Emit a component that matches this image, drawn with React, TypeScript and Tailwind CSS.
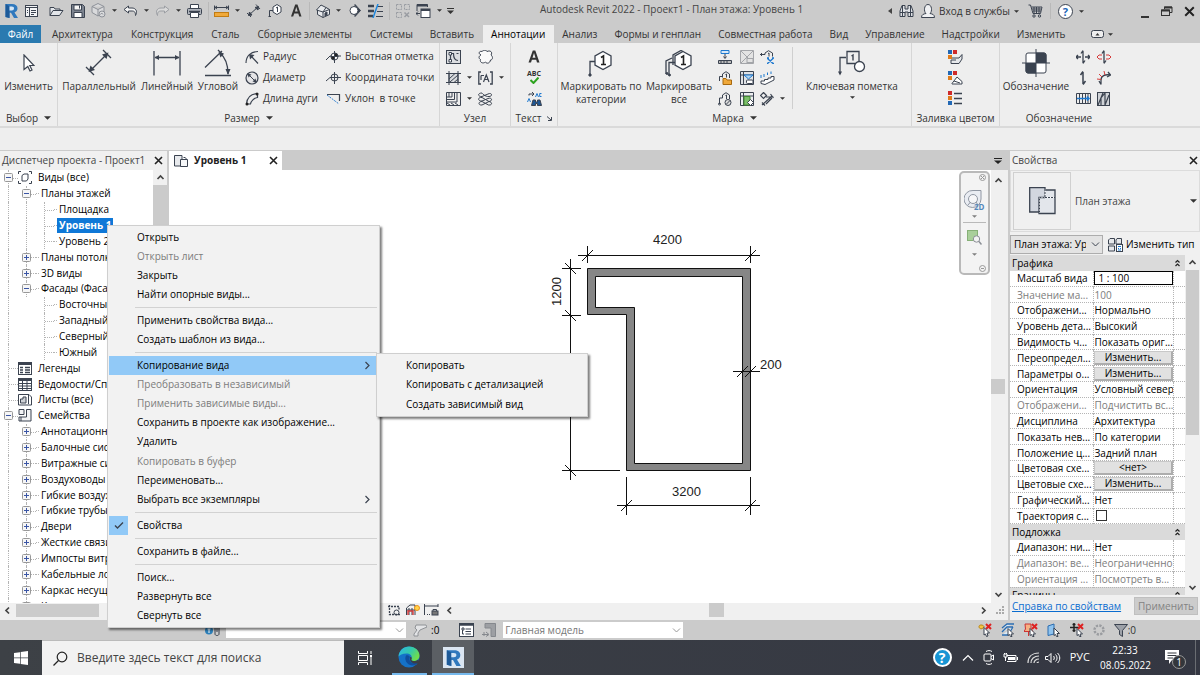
import { useState, type JSX, type ReactNode } from 'react';

type IcoProps = {
  children: ReactNode;
  w?: number;
  h?: number;
  box?: string;
  color?: string;
};

const INK = '#3b4350';

const Ico = ({ children, w = 16, h = 16, box, color = INK }: IcoProps): JSX.Element => (
  <svg
    width={w}
    height={h}
    viewBox={box ?? `0 0 ${w} ${h}`}
    fill="none"
    stroke={color}
    strokeWidth="1"
    className="shrink-0"
    aria-hidden="true"
  >
    {children}
  </svg>
);

const Caret = ({ big = false }: { big?: boolean }): JSX.Element => (
  <svg width={big ? 7 : 5} height={big ? 4 : 3} viewBox="0 0 6 3" className="shrink-0" aria-hidden="true">
    <path d="M0 0H6L3 3Z" fill="#333" />
  </svg>
);

const Chevron = ({ dir, color = '#444' }: { dir: 'up' | 'down' | 'left' | 'right'; color?: string }): JSX.Element => {
  const paths = {
    up: 'M1.5 6L4.5 3L7.5 6',
    down: 'M1.5 3L4.5 6L7.5 3',
    left: 'M6 1.5L3 4.5L6 7.5',
    right: 'M3 1.5L6 4.5L3 7.5',
  };
  return (
    <Ico w={9} h={9} color={color}>
      <path d={paths[dir]} strokeWidth="1.7" />
    </Ico>
  );
};

const Cross = ({ size = 9 }: { size?: number }): JSX.Element => (
  <Ico w={size} h={size} box="0 0 9 9" color="#222">
    <path d="M1 1L8 8M8 1L1 8" strokeWidth="1.6" />
  </Ico>
);

/* ---------- title bar ---------- */

const QatButton = ({ label, children }: { label: string; children: ReactNode }): JSX.Element => (
  <button type="button" aria-label={label} className="flex h-[21px] w-[21px] shrink-0 items-center justify-center">
    {children}
  </button>
);

const QatCaret = ({ label }: { label: string }): JSX.Element => (
  <button type="button" aria-label={label} className="flex h-[21px] w-[11px] shrink-0 items-center justify-center">
    <Caret />
  </button>
);

const QatLine = (): JSX.Element => (
  <span className="flex w-[6px] shrink-0 justify-center">
    <span className="h-[18px] w-px bg-[#b9b9b9]" />
  </span>
);

const RevitLogo = ({ size }: { size: number }): JSX.Element => (
  <svg width={size} height={size} viewBox="0 0 16 16" className="shrink-0" aria-hidden="true">
    <path d="M2.500 1H9C12.500 1 14.500 2.600 14.500 5.300C14.500 7.500 13.200 8.800 11.500 9.400L15 15H11L8 9.800H6.500V15L2.500 14Z" fill="#2f78bd" />
    <path d="M2.500 1L6.500 3.200V15L2.500 14Z" fill="#1d5a99" />
    <path d="M6.500 3.500H8.800C10.200 3.500 11 4.200 11 5.400C11 6.700 10.100 7.400 8.800 7.400H6.500Z" fill="#d5e6f5" />
  </svg>
);

const TitleBar = (): JSX.Element => (
  <header className="flex h-[25px] shrink-0 items-start justify-between bg-[#cbcbcb]">
    <div className="flex items-center">
      <QatButton label="Revit">
        <RevitLogo size={16} />
      </QatButton>
      <QatButton label="Главная">
        <Ico w={13} h={12}>
          <rect x=".5" y=".5" width="12" height="11" fill="#f3f4f6" />
          <path d="M.5 2.500H12.500M4.500 3V11M6 5.500H11M6 7.500H11M6 9.500H9M2 5.500H3M2 7.500H3" />
        </Ico>
      </QatButton>
      <span className="w-1 shrink-0" />
      <QatButton label="Открыть">
        <Ico w={15} h={12}>
          <path d="M1 10.500V2.500H5L6 4H11V5.500M1 10.500L4 5.500H14L10.500 10.500Z" fill="#e3e6ea" />
        </Ico>
      </QatButton>
      <QatButton label="Сохранить">
        <Ico w={14} h={14}>
          <path d="M.5.5H11.500L13.500 2.500V13.500H.5Z" fill="#7d8490" />
          <path d="M3 1H10.500V6H3Z" fill="#f6f6f6" />
          <path d="M3 8.500H11V13.500H3Z" fill="#fff" />
          <path d="M8.500 1.500V4.500" />
        </Ico>
      </QatButton>
      <QatButton label="Синхронизация">
        <Ico w={15} h={15} color="#8d9198">
          <path d="M7 .5L13 3.500V9L7 13L1 9.500V3.500Z M1 3.500L7 6.500L13 3.500M7 6.500V13" fill="#d9dadc" />
          <circle cx="11" cy="11" r="3" fill="#d9dadc" />
          <path d="M9.500 11.500L10.700 10L12 11.500" />
        </Ico>
      </QatButton>
      <QatCaret label="Варианты синхронизации" />
      <QatButton label="Отменить">
        <Ico w={15} h={12}>
          <path d="M5.500 1L1 4.500L5.500 8V6H9C11.500 6 12.500 7 12.500 10.500C15 6 12.500 3 9 3H5.500Z" fill="#f4f4f4" />
        </Ico>
      </QatButton>
      <QatCaret label="Список отмены" />
      <QatButton label="Повторить">
        <Ico w={15} h={12} color="#9b9ea3">
          <path d="M9.500 1L14 4.500L9.500 8V6H6C3.500 6 2.500 7 2.500 10.500C0 6 2.500 3 6 3H9.500Z" fill="#dadada" />
        </Ico>
      </QatButton>
      <QatCaret label="Список повтора" />
      <QatButton label="Печать">
        <Ico w={15} h={14}>
          <path d="M3.500 5V.5H11.500V5" fill="#fff" />
          <rect x=".5" y="4.500" width="14" height="6" rx="1" fill="#aeb3bb" />
          <path d="M2 7.500H13" strokeWidth="1.500" />
          <path d="M3.500 8.500H11.500V13.500H3.500Z" fill="#fff" />
        </Ico>
      </QatButton>
      <QatLine />
      <QatButton label="Измерить">
        <Ico w={15} h={12}>
          <path d="M.5.500V5M14.500.5V5M1 2.500H14M3 1L1 2.500L3 4M12 1L14 2.500L12 4" />
          <rect x=".5" y="7.500" width="14" height="4" fill="#f0a93a" stroke="#c27c12" />
        </Ico>
      </QatButton>
      <QatCaret label="Варианты измерения" />
      <QatButton label="Параллельный размер">
        <Ico w={15} h={14}>
          <path d="M3 11L12 3M1 9L5 13M10 .5L14 5" />
          <path d="M2.500 11.500L3.500 8L6 11ZM12.500 2.500L9 3.500L12 6Z" fill={INK} />
        </Ico>
      </QatButton>
      <QatButton label="Марка по категории">
        <Ico w={14} h={14}>
          <path d="M1.500 12V6.500H5M.5 12.500H3" />
          <path d="M9 .5L13 3V8L9 10.500L5 8V3Z" fill="#fff" />
          <path d="M8 4L9.500 3V8" />
        </Ico>
      </QatButton>
      <QatButton label="Текст">
        <Ico w={12} h={13}>
          <path d="M1 12.500L5.200.5H7.500L11.500 12.500H9.200L8.300 9.500H4.200L3.200 12.500ZM4.900 7.500H7.700L6.300 3Z" fill="#333" stroke="none" />
        </Ico>
      </QatButton>
      <QatLine />
      <QatButton label="3D вид">
        <Ico w={14} h={14}>
          <path d="M.5 6L5 1L10 3.500L13.500 5.500V10.500L7 13.500L1.500 10.500V6" fill="#e8eaed" />
          <path d="M.5 6L7 8L13.500 5.500M7 8V13.500M7 8L10 3.500" />
          <path d="M9 9L11 8V11L9 12Z" fill={INK} />
        </Ico>
      </QatButton>
      <QatCaret label="Варианты 3D вида" />
      <QatButton label="Разрез">
        <Ico w={12} h={13}>
          <path d="M6 .5L11.500 6.500L6 12.500Z" fill={INK} />
          <circle cx="5" cy="6.500" r="4" fill="#fff" />
        </Ico>
      </QatButton>
      <QatButton label="Тонкие линии">
        <Ico w={15} h={14}>
          <path d="M0 2H6M0 7H6M0 12H5" strokeWidth="2.600" />
          <path d="M9 2.500H15M9 7.500H15M8 12.500H15" />
          <path d="M10 0L5 14" stroke="#1d87e0" strokeWidth="1.500" />
        </Ico>
      </QatButton>
      <QatLine />
      <QatButton label="Закрыть неактивные">
        <Ico w={14} h={14} color="#999ca2">
          <path d="M.5.5H5.500V5.500H.5ZM8.500.5H13.500V5.500H8.500ZM.5 8.500H5.500V13.500H.5Z" strokeDasharray="2 1" />
          <path d="M8.500 8.500L13 13M13 8.500L8.500 13" strokeWidth="1.500" />
        </Ico>
      </QatButton>
      <QatButton label="Переключить окна">
        <Ico w={15} h={14}>
          <path d="M1 7V.5H11.500V3" />
          <path d="M1 1.500H11.500" strokeWidth="2" />
          <rect x="5" y="5" width="9" height="8.500" fill="#fff" />
          <path d="M5 6H14" strokeWidth="2" />
          <path d="M0 9.500H4M2 7.500L0 9.500L2 11.500" />
        </Ico>
      </QatButton>
      <QatCaret label="Список окон" />
      <button type="button" aria-label="Настройка панели" className="flex h-[21px] w-[10px] items-center justify-center">
        <Ico w={7} h={6}>
          <path d="M0 .5H7" stroke="#333" />
          <path d="M0 2.500H7L3.500 6Z" fill="#333" stroke="none" />
        </Ico>
      </button>
    </div>
    <h1 className="truncate px-2 text-[10px] leading-[18px] text-[#444]">
      Autodesk Revit 2022 - Проект1 - План этажа: Уровень 1
    </h1>
    <div className="flex h-[22px] shrink-0 items-center">
      <Ico w={4} h={6}>
        <path d="M4 0V6L0 3Z" fill="#444" stroke="none" />
      </Ico>
      <button type="button" aria-label="Поиск" className="ml-[7px]">
        <Ico w={15} h={14}>
          <path d="M3 1.500H6V5H9V1.500H12L14 7V12.500H9V8H6V12.500H1V7ZM1 8.500H6M9 8.500H14M3.500 1.500V12M11.500 1.500V12" fill="#dfe2e6" />
        </Ico>
      </button>
      <button type="button" className="ml-[7px] flex items-center gap-1 whitespace-nowrap text-[10px] text-[#333]">
        <Ico w={14} h={14}>
          <path d="M.5 13.500C.5 10.500 2.500 10 5 9.500C2.500 7.500 3 .5 7 .5C11 .5 11.500 7.500 9 9.500C11.500 10 13.500 10.500 13.500 13.500Z" fill="#f0f1f3" />
        </Ico>
        Вход в службы
        <Caret />
      </button>
      <button type="button" aria-label="Корзина" className="ml-[9px]">
        <Ico w={15} h={14}>
          <path d="M.5 1H2.500L5 9.500H12.500L14 3H3.500M4 5H13M5 7H13M6 3V9M8.500 3V9M11 3V9" />
          <circle cx="6" cy="12" r="1.200" />
          <circle cx="11.500" cy="12" r="1.200" />
        </Ico>
      </button>
      <span className="mx-[7px] h-[16px] w-px bg-[#b9b9b9]" />
      <button
        type="button"
        aria-label="Справка"
        className="flex h-[15px] w-[15px] items-center justify-center rounded-full border border-[#3b4350] bg-white text-[11px] font-bold leading-none text-[#1a66b8]"
      >
        ?
      </button>
      <span className="ml-[6px]">
        <Caret />
      </span>
      <button type="button" aria-label="Свернуть" className="ml-[57px] flex h-4 w-[8px] items-end pb-[1px]">
        <span className="h-[2px] w-full bg-[#333]" />
      </button>
      <button type="button" aria-label="Восстановить" className="ml-[12px]">
        <Ico w={12} h={11} color="#333">
          <path d="M3.500 3V1H11V6.500H8.500" />
          <path d="M3 1.500H11" strokeWidth="2" />
          <rect x=".5" y="4" width="8" height="5.500" />
          <path d="M.5 4.500H8.500" strokeWidth="2" />
        </Ico>
      </button>
      <button type="button" aria-label="Закрыть" className="ml-[11px] mr-[5px]">
        <Cross size={11} />
      </button>
    </div>
  </header>
);

/* ---------- ribbon ---------- */

const TABS = [
  'Архитектура',
  'Конструкция',
  'Сталь',
  'Сборные элементы',
  'Системы',
  'Вставить',
  'Аннотации',
  'Анализ',
  'Формы и генплан',
  'Совместная работа',
  'Вид',
  'Управление',
  'Надстройки',
  'Изменить',
];

const RibbonTabs = ({ active, onPick }: { active: string; onPick: (tab: string) => void }): JSX.Element => (
  <nav className="flex h-[18px] shrink-0 bg-[#cbcbcb] text-[10px] leading-[17px] text-[#333]">
    <button type="button" className="w-[41px] shrink-0 bg-[#2a7ab0] text-white">
      Файл
    </button>
    <div className="ml-[2px] flex">
      {TABS.map((tab, i) => (
        <button
          key={tab}
          type="button"
          onClick={() => {
            onPick(tab);
          }}
          className={`whitespace-nowrap pr-[9px] ${i < 5 ? 'pl-[9px]' : 'pl-[8px]'} ${tab === active ? 'bg-[#eeeeee] text-black' : ''}`}
        >
          {tab}
        </button>
      ))}
    </div>
    <button type="button" aria-label="Свернуть ленту" className="ml-[17px] flex items-center gap-1">
      <Ico w={13} h={8}>
        <rect x=".5" y=".5" width="12" height="7" rx="2" fill="#eee" />
        <path d="M4.500 5.500L6.500 3L8.500 5.500Z" fill="#333" stroke="none" />
      </Ico>
      <Caret />
    </button>
  </nav>
);

type PanelProps = { title: string; width: string; caret?: boolean; corner?: boolean; children: ReactNode };

const Panel = ({ title, width, caret, corner, children }: PanelProps): JSX.Element => (
  <section className={`flex shrink-0 flex-col border-r border-[#d6d6d6] ${width}`}>
    <div className="flex h-[67px] items-start pt-[3px]">{children}</div>
    <div className="flex h-[16px] items-center justify-center gap-[6px] whitespace-nowrap text-[10px] text-[#333]">
      {title}
      {caret && <Caret big />}
      {corner && (
        <Ico w={5} h={5}>
          <path d="M0 .5L4 4M4.500 1V4.500H1" />
        </Ico>
      )}
    </div>
  </section>
);

type BigButtonProps = { label: string; width: string; caret?: boolean; children: ReactNode };

const BigButton = ({ label, width, caret, children }: BigButtonProps): JSX.Element => (
  <button
    type="button"
    className={`flex shrink-0 flex-col items-center text-center text-[10px] leading-[13px] text-[#333] ${width}`}
  >
    <span className="flex h-[34px] items-center">{children}</span>
    <span className="whitespace-pre">{label}</span>
    {caret && (
      <span className="flex h-[9px] items-center">
        <Caret />
      </span>
    )}
  </button>
);

const RowButton = ({ label, children }: { label: string; children: ReactNode }): JSX.Element => (
  <button type="button" className="flex h-[21px] items-center gap-[4px] whitespace-pre text-[10px] text-[#333]">
    {children}
    {label}
  </button>
);

const Tool = ({ label, caret, children }: { label: string; caret?: boolean; children: ReactNode }): JSX.Element => (
  <button type="button" aria-label={label} className="flex h-[21px] items-center gap-[6px]">
    {children}
    {caret && <Caret />}
  </button>
);

const TagShape = (): JSX.Element => (
  <>
    <path d="M15 1.500L23 6V15L15 19.500L7 15V6Z" fill="#fff" strokeWidth="1.300" />
    <path d="M13 7.500L15.500 6V14.500M13 14.500H18" strokeWidth="1.600" stroke="#222" />
  </>
);

const Ribbon = (): JSX.Element => (
  <div className="flex h-[85px] shrink-0 overflow-hidden border-b-2 border-[#dadada] bg-[#eeeeee]">
    <Panel title="Выбор" width="w-[58px]" caret>
      <BigButton label="Изменить" width="w-[57px]">
        <Ico w={12} h={18}>
          <path d="M1 1L11 11.500H6.800L9 16L7 17L4.800 12.500L1 15.500Z" fill="#fff" strokeWidth="1.200" />
        </Ico>
      </BigButton>
    </Panel>
    <Panel title="Размер" width="w-[382px]" caret>
      <BigButton label="Параллельный" width="w-[82px]">
        <Ico w={28} h={28}>
          <path d="M5 22L22 5M1 18L9 26M18 1L26 9" strokeWidth="1.300" />
          <path d="M3.500 23L5.500 16.500L10 21ZM23.500 3.500L17 5.500L21.500 10Z" fill={INK} stroke="none" />
        </Ico>
      </BigButton>
      <BigButton label="Линейный" width="w-[54px]">
        <Ico w={28} h={26}>
          <path d="M1 1V25.500M27 1V25.500M2 7.500H26" strokeWidth="1.300" />
          <path d="M1.500 7.500L6 5V10ZM26.500 7.500L22 5V10Z" fill={INK} stroke="none" />
        </Ico>
      </BigButton>
      <BigButton label="Угловой" width="w-[48px]">
        <Ico w={28} h={28}>
          <path d="M1 18.500L18 2M1 26.500H27M16 4C22 9 24 17 24 25M14 1L19 6" strokeWidth="1.300" />
          <path d="M14.500 3L20 4.500L16.500 8.500ZM24 26L21.500 20H26.500Z" fill={INK} stroke="none" />
        </Ico>
      </BigButton>
      <div className="ml-[3px] w-[81px]">
        <RowButton label="Радиус">
          <Ico w={14} h={14}>
            <path d="M1 13C1 6 6 1.500 13 1.500M6.500 6.500L13 13.500" strokeWidth="1.200" />
            <path d="M4 4L9.500 5L5 9.500Z" fill={INK} stroke="none" />
          </Ico>
        </RowButton>
        <RowButton label="Диаметр">
          <Ico w={14} h={14}>
            <circle cx="7" cy="7" r="6" fill="#e4e4e6" strokeWidth="1.200" />
            <path d="M3 3L11 11" />
            <path d="M2.500 2.500L6.500 3.500L3.500 6.500ZM11.500 11.500L7.500 10.500L10.500 7.500Z" fill={INK} stroke="none" />
          </Ico>
        </RowButton>
        <RowButton label="Длина дуги">
          <Ico w={14} h={14}>
            <path d="M1.500 12C2 5.500 6 2 12.500 1.500M5.500 12C6 9 9 6 12.500 5.500M1 12H6M12.500 1V6" strokeWidth="1.200" />
            <circle cx="2" cy="12" r="1.500" fill="#222" stroke="none" />
            <circle cx="12" cy="2" r="1.500" fill="#222" stroke="none" />
          </Ico>
        </RowButton>
      </div>
      <div>
        <RowButton label="Высотная отметка">
          <Ico w={15} h={12}>
            <path d="M0 9L4 5H15M8.500 0V12" />
            <circle cx="8.500" cy="5.500" r="3.500" fill="#fff" />
            <path d="M8.500 5.500V2A3.500 3.500 0 0 1 12 5.500ZM8.500 5.500V9A3.500 3.500 0 0 1 5 5.500Z" fill="#222" />
          </Ico>
        </RowButton>
        <RowButton label="Координата точки">
          <Ico w={15} h={12}>
            <circle cx="8.500" cy="5.500" r="3.500" />
            <path d="M0 9L4 5.500H15M8.500 0V12" />
          </Ico>
        </RowButton>
        <RowButton label="Уклон  в точке">
          <Ico w={15} h={12}>
            <path d="M1 1.500H13.500V8" strokeWidth="1.200" />
            <path d="M1 2L13 11" stroke="#2f7fd0" strokeDasharray="2 1" />
          </Ico>
        </RowButton>
      </div>
    </Panel>
    <Panel title="Узел" width="w-[71px]">
      <div className="ml-[6px] w-[32px]">
        <Tool label="Линия детализации">
          <Ico w={15} h={14}>
            <rect x=".5" y=".5" width="14" height="13" fill="#dcdee1" />
            <path d="M4.500 4V11M5.500 3.500H7.500C7.500 8 9 10.500 12 10.500M10.500 3.500H12.500" strokeWidth="1.200" />
            <path d="M3 2.500H5.500V5H3ZM3 9.500H5.500V12H3Z" fill="#fff" />
          </Ico>
        </Tool>
        <Tool label="Область" caret>
          <Ico w={15} h={14}>
            <path d="M3 2.500H12V11.500H3Z" fill="#d9dbde" />
            <path d="M0 2.500H15M0 11.500H15M3 0V14M12 0V14M3 8L9 2.500M4 11L12 4M8 11.500L12 8" />
          </Ico>
        </Tool>
        <Tool label="Компонент" caret>
          <Ico w={15} h={14}>
            <path d="M.5.5H14.500V13.500H.5ZM.5 5H6V.5M8.500 1V7.500H1M11 1V10H1M3 1V5" />
            <path d="M1 11L4 13M5 11L8 13M9 11L12 13" />
          </Ico>
        </Tool>
      </div>
      <div>
        <Tool label="Пометочное облако">
          <Ico w={15} h={14}>
            <path d="M3 5C0 4 1 .5 4 1.500C6 -.5 9 .5 9 1.500C12 0 15 2 13 5C15.500 7 14.500 10 12.500 10C12 13.500 8.500 14 7.500 12C5 14 1.500 12.500 2.500 9.500C.5 8.500 .5 6 3 5Z" fill="#fafafa" />
          </Ico>
        </Tool>
        <Tool label="Группа элементов узла" caret>
          <Ico w={15} h={14}>
            <path d="M3 1H.8V13H3M12 1H14.200V13H12" strokeWidth="1.300" />
            <path d="M3 4.500H6M3 4.500V9M5.500 11L8.300 4L11 11M6.500 8.500H10" strokeWidth="1.200" />
          </Ico>
        </Tool>
        <Tool label="Изоляция">
          <Ico w={15} h={14}>
            <path d="M4 1C-1 1 0 5 4 4.500L10 2C14 0 15 4.500 11 4.500C7 5 4 1 4 1M4 5.500C-1 5 0 9.500 4 9L10 6.500C14 5 15 9 11 9.500L4 5.500M4 9.500C0 9.500 0 13.500 4 13L11 9.500C14.500 10 14.500 13.500 10.500 13Z" />
          </Ico>
        </Tool>
      </div>
    </Panel>
    <Panel title="Текст" width="w-[47px]" corner>
      <div className="flex w-full flex-col items-center">
        <Tool label="Текст">
          <Ico w={12} h={13}>
            <path d="M.5 12.500L4.800.5H7.300L11.500 12.500H9L8.200 9.800H3.900L3 12.500ZM4.500 7.800H7.500L6 3Z" fill="#333" stroke="none" />
          </Ico>
        </Tool>
        <Tool label="Орфография">
          <span className="flex flex-col items-center">
            <span className="h-[6px] text-[7px] font-bold leading-[6px] text-[#333]">ABC</span>
            <Ico w={9} h={7} color="#2da31f">
              <path d="M.5 3L3.500 6L8.500 .5" strokeWidth="2" />
            </Ico>
          </span>
        </Tool>
        <Tool label="Найти и заменить">
          <Ico w={15} h={14}>
            <path d="M2 3.500V2H6M5 0L7 2L5 4" />
            <path d="M8.500 5L10 1.500L11.500 5M14.500 1.500H12.700V4.500H14.500M.5 10L2 6.500L3.500 10" stroke="#1d78cf" />
            <path d="M6 8H8.500V10H10.500V8H13L14.500 13.500H10.500V11.500H8.500V13.500H4.500Z" fill="#1e5795" />
          </Ico>
        </Tool>
      </div>
    </Panel>
    <Panel title="Марка" width="w-[354px]" caret>
      <BigButton label={'Маркировать по\nкатегории'} width="w-[86px]">
        <Ico w={26} h={27}>
          <path d="M2 25V11.500H7" strokeWidth="1.300" />
          <circle cx="2" cy="25" r="1.200" fill={INK} />
          <TagShape />
        </Ico>
      </BigButton>
      <BigButton label={'Маркировать\nвсе'} width="w-[70px]">
        <Ico w={29} h={27} box="-3 0 29 27">
          <path d="M-2 24V11L4 8M1 25.500V12.500H7M5 15V5L13 .5L15 1.500" strokeWidth="1.300" />
          <circle cx="-1" cy="23.500" r="1" fill={INK} />
          <circle cx="1.500" cy="25" r="1" fill={INK} />
          <TagShape />
        </Ico>
      </BigButton>
      <div className="ml-[4px] w-[22px]">
        <Tool label="Марка балки">
          <Ico w={14} h={14}>
            <path d="M3 .5H11V3.500H3Z" stroke="#1d78cf" fill="#d8e9f8" />
            <path d="M7 4V8M5.500 6.500L7 8.500L8.500 6.500" />
            <path d="M.5 10.500H13.500V13.500H.5ZM3 10.500V13M6 10.500V13M9 10.500V13" fill="#bbb" />
          </Ico>
        </Tool>
        <Tool label="Марка материала">
          <Ico w={14} h={14}>
            <path d="M1.500 10V5.500H4.500M4.500 6.500V3L8 .7L11.500 3V7M7.500 3.500L8.500 3V6.500" />
            <path d="M5 7.500H8L9 9H13.500V13.500H5Z" fill="#f0a93a" stroke="#a7690f" />
          </Ico>
        </Tool>
        <Tool label="Марка арматуры">
          <Ico w={14} h={14}>
            <path d="M1.500 12V6H4.500V3L8 .7L11.500 3V7M7.500 3.500L8.500 3V7" />
            <circle cx="1.500" cy="12" r="1" />
            <circle cx="10" cy="10.500" r="3" fill="#ddd" />
            <path d="M8 12.500L12 8.500" />
          </Ico>
        </Tool>
      </div>
      <div className="w-[21px]">
        <Tool label="Марка помещения">
          <Ico w={14} h={14} color="#a3a5a9">
            <path d="M.5.5H13.500V13.500H.5ZM1 1L13 13M13 1L1 13" fill="#e3e3e3" />
            <rect x="7" y="8.500" width="6" height="4" fill="#e3e3e3" />
          </Ico>
        </Tool>
        <Tool label="Марка пространства">
          <Ico w={14} h={14}>
            <path d="M.5.5H13.500V13.500H.5ZM3.500.5V13M.5 4H13.500" fill="#dfe2e6" />
            <path d="M4 4H13L8.500 8Z" fill="#b5d6f0" stroke="#1d78cf" />
            <rect x="6.500" y="9" width="6.500" height="3.500" rx="1" fill="#fff" />
          </Ico>
        </Tool>
        <Tool label="Марка зоны">
          <Ico w={14} h={14}>
            <path d="M.5.5H13.500V13.500H.5ZM3.500 .5V13M.5 4H13.500" fill="#eceef0" />
            <path d="M4 4.500H10V13H4Z" fill="#7cc06a" stroke="#458a35" />
            <path d="M10.500 7.500L13.500 10.500L10.500 13.500L7.500 10.500Z" fill="#fff" />
          </Ico>
        </Tool>
      </div>
      <div className="w-[31px]">
        <Tool label="Просмотр марок">
          <Ico w={14} h={14}>
            <path d="M0 4.500H5V3L8.500 .7L12.500 3V6.500M8 3.500L9 3V6.500M1.500 3V6" />
            <path d="M7.500 8.500L13 13.500M13 8.500L7.500 13.500M7 8H9M12 8H14M7 13.500H9M12 13.500H14" stroke="#1d78cf" strokeWidth="1.400" />
          </Ico>
        </Tool>
        <Tool label="Номер проступи">
          <Ico w={15} h={14}>
            <path d="M1 12.500V10H4.500V8.500H8V7H11V5.500H14V9L5 13.500Z" fill="#fff" />
            <path d="M1 7V4M4 6V3M7.500 4V1.500M11 3V.5" stroke="#1d78cf" />
          </Ico>
        </Tool>
        <Tool label="Несколько арматур" caret>
          <Ico w={14} h={14}>
            <path d="M3.500 .5L6.500 3.500L3.500 6.500L.5 3.500ZM6 5H13.500M2 13L12 4M6 12L12 6M2 10.500L5 13.500M10.500 2L13.500 6" strokeWidth="1.200" />
          </Ico>
        </Tool>
      </div>
      <span className="ml-[1px] mt-[1px] h-[62px] w-px bg-[#cfcfcf]" />
      <BigButton label="Ключевая пометка" width="w-[118px]" caret>
        <Ico w={28} h={26}>
          <path d="M2 24V7.500H8M21 14V1.500H9V13.500H17" strokeWidth="1.300" />
          <path d="M0 21.500H4L2 25.500Z" fill={INK} stroke="none" />
          <path d="M13.500 6L15 5V10.500" strokeWidth="1.400" />
          <circle cx="21.500" cy="16.500" r="5" fill="#fff" strokeWidth="1.300" />
        </Ico>
      </BigButton>
    </Panel>
    <Panel title="Заливка цветом" width="w-[88px]">
      <div className="flex w-full flex-col items-center">
        <Tool label="Обозначение заливки трубопроводов">
          <Ico w={15} h={14}>
            <path d="M4 8H11L14 4.500V9L11 13.500H3V10H8" fill="#e6e8eb" />
            <path d="M0 0H4V4H0Z" fill="#2268b5" stroke="none" />
            <path d="M5 0H9V4H5Z" fill="#cf2a2a" stroke="none" />
            <path d="M0 5H4V9H0Z" fill="#e07b1a" stroke="none" />
          </Ico>
        </Tool>
        <Tool label="Обозначение заливки воздуховодов">
          <Ico w={15} h={14}>
            <path d="M4 12.500L9 6L14 10.500V13H4ZM6 10L12 12" fill="#fff" />
            <path d="M0 0H4V4H0Z" fill="#2268b5" stroke="none" />
            <path d="M5 0H9V4H5Z" fill="#cf2a2a" stroke="none" />
            <path d="M0 5H4V9H0Z" fill="#e07b1a" stroke="none" />
          </Ico>
        </Tool>
        <Tool label="Легенда цветового обозначения">
          <Ico w={15} h={15}>
            <path d="M6 2.500H14M6 7.500H14M6 12.500H14" strokeWidth="1.300" />
            <path d="M0 0H4V4H0Z" fill="#cf2a2a" stroke="none" />
            <path d="M0 5H4V9H0Z" fill="#e07b1a" stroke="none" />
            <path d="M0 10H4V14H0Z" fill="#2268b5" stroke="none" />
          </Ico>
        </Tool>
      </div>
    </Panel>
    <section className="flex w-[118px] shrink-0 flex-col">
      <div className="flex h-[67px] items-start pt-[3px]">
        <BigButton label="Обозначение" width="w-[72px]">
          <Ico w={28} h={28}>
            <path d="M14 0V28M0 14H28" />
            <rect x="4" y="4" width="20" height="20" rx="2" fill="#fff" />
            <path d="M14 4H22A2 2 0 0 1 24 6V14H14ZM14 14V24H6A2 2 0 0 1 4 22V14Z" fill={INK} />
          </Ico>
        </BigButton>
        <div className="ml-[4px] w-[21px]">
          <Tool label="Направление пролета">
            <Ico w={14} h={14}>
              <path d="M7 1V13M5 3.500L7 .5M9 10.500L7 13.500M0 7H5M9 7H14M2 5L0 7L2 9M12 5L14 7L12 9" strokeWidth="1.300" />
            </Ico>
          </Tool>
          <Tool label="Балка">
            <Ico w={14} h={14}>
              <path d="M7 1V13M4.500 4L7 .5M9.500 10L7 13.500" strokeWidth="1.500" />
            </Ico>
          </Tool>
          <Tool label="Траектория лестницы">
            <Ico w={15} h={11}>
              <path d="M.5.5H14.500V10.500H.5ZM3.500.5V10.500M6.500.5V10.500M9.500.5V10.500M12 .5V10.500" />
              <path d="M1 5.500H13M11 3.500L13 5.500L11 7.500" stroke="#1d78cf" strokeWidth="1.500" />
            </Ico>
          </Tool>
        </div>
        <div>
          <Tool label="Армирование по площади">
            <Ico w={14} h={14}>
              <path d="M5 5H2L0 7L2 9H5M9 5H12L14 7L12 9H9" stroke="#d63a3a" />
              <path d="M7 1V13M5 3.500L7 .5M9 10.500L7 13.500" strokeWidth="1.300" />
            </Ico>
          </Tool>
          <Tool label="Армирование по траектории">
            <Ico w={14} h={14}>
              <path d="M4 13.500V9C4 5 8 3 13 4M11 1L13.500 4L10 6M2 10L4 13.500" strokeWidth="1.300" />
              <path d="M0 8L4 8.500M2 3L5 6M7 0L8 4" stroke="#d63a3a" />
            </Ico>
          </Tool>
          <Tool label="Область заполнения">
            <Ico w={13} h={14}>
              <rect x=".5" y=".5" width="12" height="13" fill="#cfd2d6" />
              <path d="M1 13L6 1M4 13V6L8 1M8 13L12 3M8 1V13" strokeWidth="1.200" />
            </Ico>
          </Tool>
        </div>
      </div>
      <div className="flex h-[16px] items-center justify-center text-[10px] text-[#333]">Обозначение</div>
    </section>
  </div>
);

/* ---------- project browser ---------- */

type Node = {
  text: string;
  level: 0 | 1 | 2;
  mark?: 'plus' | 'minus';
  icon?: 'views' | 'legend' | 'sheet' | 'list' | 'family';
  tail?: boolean;
};

const NODES: Node[] = [
  { text: 'Виды (все)', level: 0, mark: 'minus', icon: 'views' },
  { text: 'Планы этажей', level: 1, mark: 'minus' },
  { text: 'Площадка', level: 2 },
  { text: 'Уровень 1', level: 2 },
  { text: 'Уровень 2', level: 2 },
  { text: 'Планы потолка', level: 1, mark: 'plus' },
  { text: '3D виды', level: 1, mark: 'plus' },
  { text: 'Фасады (Фасад)', level: 1, mark: 'minus' },
  { text: 'Восточный', level: 2, tail: true },
  { text: 'Западный', level: 2, tail: true },
  { text: 'Северный', level: 2, tail: true },
  { text: 'Южный', level: 2, tail: true },
  { text: 'Легенды', level: 0, icon: 'legend' },
  { text: 'Ведомости/Спец', level: 0, icon: 'list' },
  { text: 'Листы (все)', level: 0, icon: 'sheet' },
  { text: 'Семейства', level: 0, mark: 'minus', icon: 'family' },
  { text: 'Аннотационные', level: 1, mark: 'plus' },
  { text: 'Балочные системы', level: 1, mark: 'plus' },
  { text: 'Витражные системы', level: 1, mark: 'plus' },
  { text: 'Воздуховоды', level: 1, mark: 'plus' },
  { text: 'Гибкие воздуховоды', level: 1, mark: 'plus' },
  { text: 'Гибкие трубы', level: 1, mark: 'plus' },
  { text: 'Двери', level: 1, mark: 'plus' },
  { text: 'Жесткие связи', level: 1, mark: 'plus' },
  { text: 'Импосты витража', level: 1, mark: 'plus' },
  { text: 'Кабельные лотки', level: 1, mark: 'plus' },
  { text: 'Каркас несущий', level: 1, mark: 'plus' },
  { text: 'Колонны', level: 1, mark: 'plus' },
];

const NodeIcon = ({ kind }: { kind: NonNullable<Node['icon']> }): JSX.Element => {
  if (kind === 'views') {
    return (
      <Ico w={14} h={13}>
        <path d="M.5 3V.5H3M11 .5H13.500V3M.5 10V12.500H3M11 12.500H13.500V10" />
        <path d="M4 4.500L6 3H10V8L8.500 10H4Z" fill="#fff" />
      </Ico>
    );
  }
  if (kind === 'legend') {
    return (
      <Ico w={14} h={13}>
        <rect x=".5" y=".5" width="13" height="12" fill="#fff" />
        <path d="M0 1.500H14" strokeWidth="3" />
        <path d="M2 5.500H5M7 5.500H12M2 8H5M7 8H12M2 10.500H5M7 10.500H12" strokeWidth="1.500" />
      </Ico>
    );
  }
  if (kind === 'list') {
    return (
      <Ico w={14} h={13}>
        <rect x=".5" y=".5" width="13" height="12" fill="#fff" />
        <path d="M0 1.500H14" strokeWidth="3" />
        <path d="M1 5.500H13M1 8H13M1 10.500H13M4.500 3V12M9 3V12" />
      </Ico>
    );
  }
  if (kind === 'sheet') {
    return (
      <Ico w={14} h={13}>
        <path d="M.5 1.500H11L13.500 4V12H.5Z" fill="#fff" />
        <path d="M2.500 10V6H5V4H8V10ZM10.500 2V11" fill="#cfd2d6" />
      </Ico>
    );
  }
  return (
    <Ico w={14} h={13}>
      <path d="M1 .5H6V5.500H1ZM8.500 .5H13V12H1V8H8.500Z" fill="#f2f3f5" />
      <path d="M3 8V12" />
    </Ico>
  );
};

type CellKind = 'line' | 'tee' | 'plus' | 'minus' | 'empty';

const TreeCell = ({ kind }: { kind: CellKind }): JSX.Element => (
  <span className="relative flex w-[18px] shrink-0 items-center self-stretch">
    {kind !== 'empty' && <span className="absolute inset-y-0 left-[8px] border-l border-dotted border-[#b4b4b4]" />}
    {kind !== 'empty' && kind !== 'line' && (
      <span className="absolute left-[9px] right-0 top-1/2 border-t border-dotted border-[#b4b4b4]" />
    )}
    {(kind === 'plus' || kind === 'minus') && (
      <svg width="9" height="9" viewBox="0 0 9 9" className="relative ml-[4px]" aria-hidden="true">
        <rect x=".5" y=".5" width="8" height="8" rx="1" fill="#f6f6f6" stroke="#989898" />
        <path d={kind === 'plus' ? 'M2 4.500H7M4.500 2V7' : 'M2 4.500H7'} stroke="#3a55a5" />
      </svg>
    )}
  </span>
);

const TreeRow = ({ node, selected }: { node: Node; selected: boolean }): JSX.Element => (
  <li className="flex min-h-0 flex-1 items-center whitespace-nowrap">
    <TreeCell kind={node.level > 0 ? 'line' : (node.mark ?? 'tee')} />
    {node.level === 0 && node.icon && (
      <span className="flex w-[18px] shrink-0">
        <NodeIcon kind={node.icon} />
      </span>
    )}
    {node.level === 1 && <TreeCell kind={node.mark ?? 'tee'} />}
    {node.level === 2 && (
      <>
        <TreeCell kind={node.tail ? 'empty' : 'line'} />
        <TreeCell kind="tee" />
      </>
    )}
    {node.level > 0 && <span className="w-[3px] shrink-0 border-t border-dotted border-[#b4b4b4]" />}
    <button
      type="button"
      className={`self-stretch px-[2px] leading-[15px] ${selected ? 'bg-[#0f78d7] font-bold text-white' : ''}`}
    >
      {node.text}
    </button>
  </li>
);

const ProjectBrowser = (): JSX.Element => (
  <aside className="flex w-[167px] shrink-0 flex-col bg-[#f0f0f0]">
    <div className="flex h-[19px] shrink-0 items-center justify-between pl-[2px] pr-1">
      <h2 className="whitespace-nowrap text-[10px] text-[#444]">Диспетчер проекта - Проект1</h2>
      <button type="button" aria-label="Закрыть диспетчер">
        <Cross />
      </button>
    </div>
    <div className="flex min-h-0 flex-1">
      <div className="min-w-0 flex-1 overflow-hidden bg-white">
        <ul className="flex h-[444px] flex-col text-[10px] text-black">
          {NODES.map((node) => (
            <TreeRow key={node.text} node={node} selected={node.text === 'Уровень 1'} />
          ))}
        </ul>
      </div>
      <div className="flex w-[14px] shrink-0 flex-col items-center">
        <span className="flex h-[15px] items-center">
          <Chevron dir="up" />
        </span>
        <span className="h-[300px] w-full bg-[#cbcbcb]" />
      </div>
    </div>
    <div className="flex h-[14px] shrink-0 items-center pl-[3px]">
      <Chevron dir="left" />
      <span className="ml-[4px] h-[13px] w-[83px] bg-[#cbcbcb]" />
    </div>
    <span className="h-[3px] shrink-0" />
  </aside>
);

/* ---------- context menu ---------- */

type Entry = { text: string; off?: boolean; sub?: boolean; hot?: boolean; check?: boolean };

const MENU: Entry[][] = [
  [
    { text: 'Открыть' },
    { text: 'Открыть лист', off: true },
    { text: 'Закрыть' },
    { text: 'Найти опорные виды...' },
  ],
  [{ text: 'Применить свойства вида...' }, { text: 'Создать шаблон из вида...' }],
  [
    { text: 'Копирование вида', sub: true, hot: true },
    { text: 'Преобразовать в независимый', off: true },
    { text: 'Применить зависимые виды...', off: true },
    { text: 'Сохранить в проекте как изображение...' },
    { text: 'Удалить' },
    { text: 'Копировать в буфер', off: true },
    { text: 'Переименовать...' },
    { text: 'Выбрать все экземпляры', sub: true },
  ],
  [{ text: 'Свойства', check: true }],
  [{ text: 'Сохранить в файле...' }],
  [{ text: 'Поиск...' }, { text: 'Развернуть все' }, { text: 'Свернуть все' }],
];

const SUBMENU: Entry[] = [
  { text: 'Копировать' },
  { text: 'Копировать с детализацией' },
  { text: 'Создать зависимый вид' },
];

const MenuEntry = ({ entry }: { entry: Entry }): JSX.Element => (
  <button
    type="button"
    role="menuitem"
    disabled={entry.off}
    className={`flex min-h-0 flex-1 items-center whitespace-nowrap text-left ${entry.hot ? 'bg-[#91c9f7]' : ''} ${entry.off ? 'text-[#7c7c7c]' : 'text-black'}`}
  >
    <span className={`mr-[9px] flex w-[19px] shrink-0 items-center justify-center self-stretch ${entry.check ? 'bg-[#91c9f7]' : ''}`}>
      {entry.check && (
        <Ico w={10} h={9}>
          <path d="M1 4.500L3.500 7L9 1.500" strokeWidth="1.400" />
        </Ico>
      )}
    </span>
    <span className="flex-1">{entry.text}</span>
    {entry.sub && (
      <span className="mr-[7px]">
        <Ico w={7} h={9}>
          <path d="M1.500 1L5 4.500L1.500 8" strokeWidth="1.200" />
        </Ico>
      </span>
    )}
  </button>
);

const ContextMenu = (): JSX.Element => (
  <>
    <div
      role="menu"
      className="absolute left-[107px] top-[225px] flex h-[403px] w-[273px] flex-col border border-[#cfcfcf] bg-[#f2f2f2] p-px py-[2px] text-[10px] shadow-[2px_2px_2px_rgba(0,0,0,0.5)]"
    >
      {MENU.map((group, i) => (
        <div key={group[0].text} className="contents">
          {i > 0 && <hr className="my-[3px] ml-[26px] mr-px h-px shrink-0 border-0 bg-[#d2d2d2]" />}
          {group.map((entry) => (
            <MenuEntry key={entry.text} entry={entry} />
          ))}
        </div>
      ))}
    </div>
    <div
      role="menu"
      className="absolute left-[376px] top-[353px] flex h-[64px] w-[212px] flex-col border border-[#cfcfcf] bg-[#f2f2f2] p-px py-[2px] text-[10px] shadow-[2px_2px_2px_rgba(0,0,0,0.5)]"
    >
      {SUBMENU.map((entry) => (
        <MenuEntry key={entry.text} entry={entry} />
      ))}
    </div>
  </>
);

/* ---------- drawing area ---------- */

const PlanDrawing = (): JSX.Element => (
  <svg width="822" height="433" viewBox="169 170 822 433" fill="none" stroke="#111" className="shrink-0" role="img" aria-label="План этажа">
    <path
      d="M587.500 268.500H750.500V470.500H626.500V314.500H587.500ZM595.500 276.500V307.500H634.500V463.500H742.500V276.500Z"
      fill="#868686"
      fillRule="evenodd"
    />
    <path d="M578 255.500H760M587.500 246V263M750.500 246V263M617 505.500H760M626.500 477V515M750.500 477V515" />
    <path d="M570.500 259V480M562 268.500H581M562 315.500H581M562 470.500H620M733 371.500H760" />
    <path d="M582 261L593 250M745 261L756 250M621 511L632 500M745 511L756 500M737 377L748 366M745 377L756 366" />
    <path d="M565 263L576 274M565 310L576 321M565 465L576 476" />
    <g fill="#222" stroke="none" fontFamily="'Liberation Sans', Arial, sans-serif" fontSize="13">
      <text x="653" y="244">4200</text>
      <text x="672" y="496">3200</text>
      <text x="760" y="369">200</text>
      <text transform="translate(561 306) rotate(-90)">1200</text>
    </g>
  </svg>
);

const NavBar = (): JSX.Element => (
  <div className="absolute right-[1px] top-[1px] flex h-[104px] w-[31px] flex-col items-center rounded-[5px] border-2 border-[#b9b9b9] bg-[#f3f3f3] py-[1px]">
    <button type="button" aria-label="Закрыть навигацию" className="mr-[2px] self-end">
      <Ico w={7} h={7} color="#999">
        <circle cx="3.500" cy="3.500" r="3" />
        <path d="M2 2L5 5M5 2L2 5" />
      </Ico>
    </button>
    <button type="button" aria-label="Штурвал 2D" className="mt-[9px] flex">
      <Ico w={22} h={20} color="#9097a3">
        <path d="M9 .5H17V9A8.500 8.500 0 1 1 9 .5Z" fill="#e9ecf2" />
        <circle cx="9" cy="9" r="4.500" fill="#f6f6f8" />
        <path d="M4 15L6.500 12M14 15L12 12" />
        <text x="10" y="19.500" fontSize="8" fontWeight="700" fill="#5487bb" stroke="none" fontFamily="Open Sans, sans-serif">
          2D
        </text>
      </Ico>
    </button>
    <span className="mt-[5px] opacity-60">
      <Caret />
    </span>
    <span className="mt-[4px] h-px w-[23px] shrink-0 bg-[#b9b9b9]" />
    <button type="button" aria-label="Масштаб" className="mt-[7px]">
      <Ico w={15} h={15} color="#8b8f96">
        <rect x=".5" y=".5" width="10" height="10" fill="#a9cf9a" stroke="#86b077" />
        <circle cx="9.500" cy="9" r="3.200" fill="#f3f3f3" />
        <path d="M12 11.500L14.500 14.500" strokeWidth="1.500" />
      </Ico>
    </button>
    <span className="mt-[8px] opacity-60">
      <Caret />
    </span>
    <span className="mr-[2px] mt-auto self-end">
      <Ico w={7} h={7} color="#999">
        <circle cx="3.500" cy="3.500" r="3" />
        <path d="M2 3.500H5" />
      </Ico>
    </span>
  </div>
);

const ViewArea = (): JSX.Element => (
  <main className="flex min-w-0 flex-1 flex-col border-l-2 border-[#cbcbcb] bg-[#f0f0f0]">
    <div className="flex h-[19px] shrink-0 items-stretch bg-[#cbcbcb]">
      <div className="flex w-[113px] items-center bg-white pl-[5px]">
        <Ico w={14} h={12}>
          <path d="M.5.5H8V11H.5Z" fill="#e8eaed" />
          <path d="M6.500 4.500H13.500V11.500H6.500Z" fill="#f6f7f8" />
          <path d="M9.500 2.500H12V4" strokeDasharray="2 1" />
        </Ico>
        <span className="ml-[6px] flex-1 whitespace-nowrap text-[10px] font-bold text-[#222]">Уровень 1</span>
        <button type="button" aria-label="Закрыть вид" className="mr-[4px]">
          <Cross />
        </button>
      </div>
      <button type="button" aria-label="Список вкладок" className="ml-auto mr-[6px] flex items-center">
        <Ico w={8} h={6}>
          <path d="M0 .5H8" stroke="#222" />
          <path d="M0 2.500H8L4 6Z" fill="#222" stroke="none" />
        </Ico>
      </button>
    </div>
    <div className="flex min-h-0 flex-1 pr-[3px]">
      <div className="relative flex min-w-0 flex-1 justify-end overflow-hidden bg-white">
        <PlanDrawing />
        <NavBar />
      </div>
      <div className="flex w-[14px] shrink-0 flex-col items-center">
        <span className="flex h-[20px] items-center">
          <Chevron dir="up" />
        </span>
        <span className="mt-[189px] h-[15px] w-full bg-[#cbcbcb]" />
        <span className="mb-[4px] mt-auto">
          <Chevron dir="down" />
        </span>
      </div>
    </div>
    <div className="flex h-[14px] shrink-0 items-center pl-[219px] pr-[4px]">
      <button type="button" aria-label="Границы обрезки">
        <Ico w={13} h={11}>
          <path d="M1.500 0V9.500H13M0 1.500H11V5" strokeDasharray="2 1" strokeWidth="1.300" />
          <circle cx="8.500" cy="7.500" r="2.500" />
        </Ico>
      </button>
      <button type="button" aria-label="Временные свойства" className="ml-[5px]">
        <Ico w={14} h={12}>
          <path d="M.5 11V4L4 1H9V11M3 4V11M6 4V11M.5 6H9" />
          <path d="M2 11V7H7V11" stroke="#d63a3a" strokeWidth="1.400" />
          <circle cx="11" cy="4" r="2.500" fill="#ffd54a" stroke="#f0921a" />
        </Ico>
      </button>
      <button type="button" aria-label="Зависимости" className="ml-[4px]">
        <Ico w={15} h={12}>
          <path d="M.5 0V11M14 0V3M1 2H14" />
          <path d="M3 10.500H7" strokeDasharray="1 1" />
          <path d="M9 7V5.500H12.500V7" />
          <rect x="8" y="7" width="6" height="4" fill="#777" />
        </Ico>
      </button>
      <span className="ml-[6px]">
        <Chevron dir="left" />
      </span>
      <span className="ml-auto mr-[255px] h-[14px] w-[15px] bg-[#cbcbcb]" />
      <Chevron dir="right" />
      <span className="ml-[8px]">
        <Ico w={8} h={8} color="#aaa">
          <path d="M6 1H8M3 4H5M6 4H8M0 7H2M3 7H5M6 7H8" strokeWidth="2" />
        </Ico>
      </span>
    </div>
    <span className="h-[3px] shrink-0" />
  </main>
);

/* ---------- properties ---------- */

type Prop = { name: string; value: string; kind?: 'input' | 'button' | 'check' | 'head'; off?: boolean };

const PROPS: Prop[] = [
  { name: 'Графика', value: '', kind: 'head' },
  { name: 'Масштаб вида', value: '1 : 100', kind: 'input' },
  { name: 'Значение ма...', value: '100', off: true },
  { name: 'Отображени...', value: 'Нормально' },
  { name: 'Уровень дета...', value: 'Высокий' },
  { name: 'Видимость ч...', value: 'Показать ориг...' },
  { name: 'Переопредел...', value: 'Изменить...', kind: 'button' },
  { name: 'Параметры о...', value: 'Изменить...', kind: 'button' },
  { name: 'Ориентация', value: 'Условный север' },
  { name: 'Отображени...', value: 'Подчистить вс...', off: true },
  { name: 'Дисциплина', value: 'Архитектура' },
  { name: 'Показать нев...', value: 'По категории' },
  { name: 'Положение ц...', value: 'Задний план' },
  { name: 'Цветовая схе...', value: '<нет>', kind: 'button' },
  { name: 'Цветовые схе...', value: 'Изменить...', kind: 'button' },
  { name: 'Графический...', value: 'Нет' },
  { name: 'Траектория с...', value: '', kind: 'check' },
  { name: 'Подложка', value: '', kind: 'head' },
  { name: 'Диапазон: ни...', value: 'Нет' },
  { name: 'Диапазон: ве...', value: 'Неограниченно', off: true },
  { name: 'Ориентация ...', value: 'Посмотреть в...', off: true },
  { name: 'Границы', value: '', kind: 'head' },
];

const PropValue = ({ prop }: { prop: Prop }): JSX.Element => {
  if (prop.kind === 'input') {
    return (
      <input
        aria-label={prop.name}
        defaultValue={prop.value}
        className="block h-[14px] w-full border border-black bg-white px-[4px] leading-[12px] outline-none"
      />
    );
  }
  if (prop.kind === 'button') {
    return (
      <button
        type="button"
        aria-label={`${prop.name} ${prop.value}`}
        className="block h-[14px] w-full border border-b-2 border-r-2 border-[#adadad] border-l-[#c8c8c8] border-t-[#c8c8c8] bg-[#e1e1e1] leading-[11px]"
      >
        {prop.value}
      </button>
    );
  }
  if (prop.kind === 'check') {
    return (
      <input
        type="checkbox"
        aria-label={prop.name}
        className="ml-[2px] block h-[11px] w-[11px] appearance-none border border-[#333] bg-white checked:bg-[#333]"
      />
    );
  }
  return <span className="block overflow-hidden pl-[1px]">{prop.value}</span>;
};

const Properties = (): JSX.Element => (
  <aside className="flex w-[192px] shrink-0 flex-col border-l-2 border-[#cbcbcb] bg-[#f0f0f0] text-[10px]">
    <div className="flex h-[19px] shrink-0 items-center justify-between pl-[2px] pr-[2px] text-[#444]">
      <h2>Свойства</h2>
      <button type="button" aria-label="Закрыть свойства">
        <Cross />
      </button>
    </div>
    <button type="button" className="flex h-[62px] shrink-0 items-center border border-[#dcdcdc] pl-[2px] pr-[2px] text-[#444]">
      <span className="flex h-[58px] w-[58px] items-center justify-center border border-[#d0d0d0]">
        <Ico w={27} h={28}>
          <path d="M.7.7H16V25H.7Z" fill="#d3d7df" strokeWidth="1.300" />
          <path d="M16 3H26V26.500H10V10.500H16" fill="#e3e6eb" strokeWidth="1.300" />
          <path d="M16 2V10.500H10.500V26M16 10.500H26" stroke="#fff" />
          <path d="M16 2V10.500H10.500V26M16 10.500H26" strokeDasharray="2 1" />
        </Ico>
      </span>
      <span className="ml-[4px] flex-1 text-left">План этажа</span>
      <Caret big />
    </button>
    <div className="flex h-[23px] shrink-0 items-center pt-[2px]">
      <div className="relative w-[93px]">
        <select
          aria-label="Экземпляр"
          className="block h-[19px] w-full appearance-none border border-[#adadad] bg-[#e3e3e3] pl-[3px] pr-[16px] text-black"
        >
          <option>План этажа: Уровень 1</option>
        </select>
        <span className="pointer-events-none absolute right-[3px] top-[5px]">
          <Ico w={9} h={9}>
            <path d="M1 2.500L4.500 6L8 2.500" />
          </Ico>
        </span>
      </div>
      <button type="button" className="ml-[5px] flex items-center gap-[3px] whitespace-nowrap text-black">
        <Ico w={15} h={14}>
          <path d="M.5 2L2 .5H6.500V6H.5ZM8 2L9 .5H13.500V6H8ZM.5 8H6.500V13H.5Z" fill="#e6e8eb" />
          <rect x="8.500" y="6.500" width="6" height="7" fill="#fff" />
          <path d="M10 8.500H13M10 10.500H11M12 10.500H13M10 12H13" stroke="#1d78cf" />
        </Ico>
        Изменить тип
      </button>
    </div>
    <div className="flex min-h-0 flex-1 overflow-hidden">
      <div className="min-w-0 flex-1 overflow-hidden bg-white">
        <table className="h-[348px] w-full table-fixed border-collapse leading-[12px] text-black">
          <colgroup>
            <col className="w-[83px]" />
            <col />
            <col className="w-[11px]" />
          </colgroup>
          <tbody>
            {PROPS.map((prop, i) =>
              prop.kind === 'head' ? (
                <tr key={i} className="h-[15px] bg-[#dadada]">
                  <th colSpan={3} scope="colgroup" className="p-0 pl-[2px] text-left font-normal">
                    <span className="flex items-center justify-between pr-[4px]">
                      {prop.name}
                      <Ico w={7} h={8} color="#222">
                        <path d="M1.500 3.500L3.500 1.500L5.500 3.500M1.500 7L3.500 5L5.500 7" strokeWidth="1.200" />
                      </Ico>
                    </span>
                  </th>
                </tr>
              ) : (
                <tr key={i} className={`h-[15px] border-b border-dotted border-[#b5b5b5] ${prop.off ? 'text-[#7c7c7c]' : ''}`}>
                  <th scope="row" className="overflow-hidden whitespace-nowrap p-0 pl-[7px] text-left font-normal">
                    {prop.name}
                  </th>
                  <td className="overflow-hidden whitespace-nowrap border-x border-dotted border-[#b5b5b5] p-0">
                    <PropValue prop={prop} />
                  </td>
                  <td className="p-0" />
                </tr>
              ),
            )}
          </tbody>
        </table>
      </div>
      <div className="flex w-[15px] shrink-0 flex-col items-center">
        <span className="flex h-[15px] items-center">
          <Chevron dir="up" />
        </span>
        <span className="h-[165px] w-[13px] bg-[#cbcbcb]" />
        <span className="mb-[3px] mt-auto">
          <Chevron dir="down" />
        </span>
      </div>
    </div>
    <div className="flex h-[25px] shrink-0 items-center justify-between pb-[3px] pl-[2px] pr-[2px]">
      <a href="#properties" className="whitespace-nowrap text-[#0a6ccf] underline">
        Справка по свойствам
      </a>
      <button type="button" disabled className="h-[18px] w-[64px] border border-[#bfbfbf] bg-[#cccccc] text-[#838383]">
        Применить
      </button>
    </div>
  </aside>
);

/* ---------- status bar and taskbar ---------- */

const StatusBar = (): JSX.Element => (
  <footer className="flex h-[20px] shrink-0 items-center bg-[#cbcbcb] pl-[205px] text-[10px]">
    <Ico w={15} h={13}>
      <circle cx="4" cy="6.500" r="4" fill="#2c7fb8" stroke="none" />
      <path d="M2.500 5H5.500M4 5V9" stroke="#fff" />
      <path d="M10 3V10C10 12 14 12 14 10V3M12 3V8" />
    </Ico>
    <div className="relative ml-[6px] w-[180px]">
      <select aria-label="Рабочий набор" className="block h-[16px] w-full appearance-none bg-white">
        <option aria-label="Нет набора" />
      </select>
      <span className="pointer-events-none absolute right-[2px] top-[4px]">
        <Ico w={9} h={9} color="#999">
          <path d="M1 2.500L4.500 6L8 2.500" />
        </Ico>
      </span>
    </div>
    <span className="ml-[7px] flex items-center gap-[4px] text-black">
      <Ico w={14} h={13} color="#8f9296">
        <path d="M3 1H13L14 3L7 6L5 9V12H1V10L4 6L2 4Z" fill="#e3e4e6" />
      </Ico>
      :0
    </span>
    <button type="button" aria-label="Варианты" className="ml-[20px]">
      <Ico w={15} h={14}>
        <rect x=".5" y=".5" width="14" height="13" fill="#fff" />
        <path d="M0 1.500H15" strokeWidth="2.500" />
        <path d="M3 5H5V7H3ZM6.500 6H12M6.500 8.500H12M6.500 11H12M3.500 7V11H5" />
      </Ico>
    </button>
    <button type="button" aria-label="Добавить в набор" className="ml-[8px]">
      <Ico w={14} h={14} color="#85888d">
        <path d="M3 .5H13.500V13.500H9V5H3Z" fill="#9d9fa3" />
        <path d="M0 11.500H6M4 9L7 11.500L4 13.500M2 9V13" />
      </Ico>
    </button>
    <div className="relative ml-[7px] w-[180px]">
      <select aria-label="Вариант конструкции" className="block h-[16px] w-full appearance-none bg-white pl-[2px] text-[#777]">
        <option>Главная модель</option>
      </select>
      <span className="pointer-events-none absolute right-[2px] top-[4px]">
        <Ico w={9} h={9} color="#999">
          <path d="M1 2.500L4.500 6L8 2.500" />
        </Ico>
      </span>
    </div>
    <div className="ml-auto mr-[64px] flex items-center gap-[9px]">
      <button type="button" aria-label="Выбор связей">
        <Ico w={14} h={14}>
          <path d="M1 3.500C1 1.500 5 1.500 6 3.500C5 6.500 1 6.500 1 3.500Z" fill="#f4c542" stroke="#b98312" />
          <path d="M8 1L13 6M13 1L8 6" stroke="#d22" strokeWidth="2" />
          <path d="M6 4.500L11.500 10H9L10 13L8.500 13.500L7.500 11L6 12Z" fill="#fff" />
        </Ico>
      </button>
      <button type="button" aria-label="Выбор подложки">
        <Ico w={14} h={14} color="#2b6cb0">
          <path d="M1 5L6 1H13M1 9L6 4H12M1 12H7L12 4" fill="#dcebf8" strokeWidth="1.300" />
          <path d="M7 5.500L12.500 11H10L11 13.500H9.500L8.500 11.500L7 12.500Z" fill="#fff" stroke={INK} />
        </Ico>
      </button>
      <button type="button" aria-label="Выбор закрепленных">
        <Ico w={14} h={14}>
          <path d="M1 1H7V6L9 8.500H0L1.500 6ZM4.500 9V13" fill="#f6b183" stroke="#c33" />
          <path d="M8 1L13 6M13 1L8 6" stroke="#d22" strokeWidth="2" />
          <path d="M6 5.500L11.500 11H9L10 13.500H8.500L7.500 11.500L6 12.500Z" fill="#fff" />
        </Ico>
      </button>
      <button type="button" aria-label="Выбор по грани">
        <Ico w={14} h={14}>
          <path d="M1 3L7 1V11L1 12.500Z" fill="#8fc3ee" stroke="#2b6cb0" />
          <path d="M7 5L12.500 10.500H10L11 13.500H9.500L8.500 11.500L7 12.500Z" fill="#fff" />
        </Ico>
      </button>
      <button type="button" aria-label="Перетаскивание">
        <Ico w={14} h={14}>
          <path d="M4 0V9M0 4.500H9M2.500 1.500H5.500M2.500 7.500H5.500" stroke="#222" strokeWidth="1.500" />
          <path d="M8 1L13 6M13 1L8 6" stroke="#d22" strokeWidth="2" />
          <path d="M7 5.500L12.500 11H10L11 13.500H9.500L8.500 11.500L7 12.500Z" fill="#fff" />
        </Ico>
      </button>
      <Ico w={12} h={12} color="#9a9ca0">
        <circle cx="6" cy="6" r="4.500" strokeWidth="2.400" strokeDasharray="2.200 1.300" />
      </Ico>
      <span className="flex items-center text-[#333]">
        <Ico w={14} h={13}>
          <path d="M.5 .5H13.500L8.500 6.500V12.500L5.500 10.500V6.500Z" fill="#9da1a8" />
        </Ico>
        :0
      </span>
    </div>
  </footer>
);

const Taskbar = (): JSX.Element => (
  <div className="flex h-[35px] shrink-0 items-stretch bg-linear-to-r from-[#3d4146] to-[#343742] text-white">
    <button type="button" aria-label="Пуск" className="flex w-[42px] shrink-0 items-center justify-center">
      <svg width="14" height="14" viewBox="0 0 14 14" fill="#fff" aria-hidden="true">
        <path d="M0 2L6 1.200V6.600H0ZM6.700 1.100L14 0V6.600H6.700ZM0 7.300H6V12.800L0 12ZM6.700 7.300H14V14L6.700 12.900Z" />
      </svg>
    </button>
    <label className="flex w-[302px] shrink-0 items-center border-t border-[#bbb] bg-[#f2f2f2] pl-[11px]">
      <Ico w={15} h={15} color="#222">
        <circle cx="9" cy="6" r="4.800" strokeWidth="1.200" />
        <path d="M5.500 9.500L.5 14.500" strokeWidth="1.200" />
      </Ico>
      <input
        type="text"
        aria-label="Поиск"
        placeholder="Введите здесь текст для поиска"
        className="ml-[9px] min-w-0 flex-1 bg-transparent text-[12px] text-[#333] outline-none placeholder:text-[#444]"
      />
    </label>
    <button type="button" aria-label="Представление задач" className="flex w-[42px] shrink-0 items-center justify-center">
      <Ico w={15} h={14} color="#fff">
        <path d="M.5 0V2.500H9.500V0M.5 14V11.500H9.500V14M.5 4.500H9.500V9.500H.5ZM13 0V3M13 6V14" />
        <path d="M12 4H14V6H12Z" fill="#fff" stroke="none" />
      </Ico>
    </button>
    <button type="button" aria-label="Edge" className="flex w-[46px] shrink-0 flex-col items-center pt-[6px]">
      <svg width="22" height="22" viewBox="0 0 22 22" aria-hidden="true">
        <defs>
          <linearGradient id="edgeTop" x1="0" y1="0" x2="1" y2="0.500">
            <stop offset="0" stopColor="#2cb5e8" />
            <stop offset="0.600" stopColor="#35c9a8" />
            <stop offset="1" stopColor="#6fdc4c" />
          </linearGradient>
        </defs>
        <circle cx="11" cy="11" r="10.500" fill="#1572c8" />
        <path d="M.5 10.500C1 4.500 5.500 .5 11 .5C17.500 .5 21.500 5 21.500 9.500C21.500 13 19 15 16 15C13.500 15 12.800 14 13.500 12.500C14.500 9 11.500 7.500 8.500 7.500C4.500 7.500 1.500 9 .5 10.500Z" fill="url(#edgeTop)" />
        <path d="M8 9.500C6 13 8.500 19 14 19.500C17 19.500 19 18.500 20.500 16C17 18 12.500 17 11.500 14C11 12.500 11.500 11.500 12 11C11 9.500 9.500 9 8 9.500Z" fill="#0f4f9e" />
        <path d="M12.200 11C13.500 10.500 14.200 12 13.500 13C13 14.500 14 15 16 15C17 15 19 14.600 20.300 13.500L22 17L17 17.500C13 17 11 14 12.200 11Z" fill="#3a3e45" />
      </svg>
      <span className="mt-auto h-[2px] w-[35px] bg-[#76b9ed]" />
    </button>
    <button type="button" aria-label="Revit" className="flex w-[42px] shrink-0 flex-col items-center bg-[#5b5f64] pt-[7px]">
      <span className="flex h-[21px] w-[21px] items-center justify-center bg-[#dbe6f2]">
        <RevitLogo size={18} />
      </span>
      <span className="mt-auto h-[2px] w-full bg-[#76b9ed]" />
    </button>
    <div className="ml-auto flex items-center">
      <button
        type="button"
        aria-label="Справка"
        className="flex h-[19px] w-[19px] items-center justify-center rounded-full border-2 border-white bg-[#1795d4] text-[14px] font-bold leading-none"
      >
        ?
      </button>
      <button type="button" aria-label="Скрытые значки" className="ml-[10px]">
        <Ico w={12} h={8} color="#fff">
          <path d="M1 6.500L6 1.500L11 6.500" strokeWidth="1.200" />
        </Ico>
      </button>
      <span className="ml-[9px]">
        <Ico w={12} h={15} color="#fff">
          <path d="M3 1.500C5 .3 7 .3 9 1.500M3 13.500C5 14.700 7 14.700 9 13.500" />
          <rect x="1" y="4" width="7" height="7" rx="1" />
          <path d="M8 6.500L10.500 5V10L8 8.500" />
        </Ico>
      </span>
      <span className="ml-[8px]">
        <Ico w={15} h={10} color="#fff">
          <path d="M3.500 2.500H13V8.500H4M14.500 4V7" />
          <path d="M5 4H12V7H5Z" fill="#fff" stroke="none" />
          <path d="M1 1H4V4H1ZM2.500 4V8M1.500 0V1M3.500 0V1" />
        </Ico>
      </span>
      <span className="ml-[9px]">
        <Ico w={13} h={12} color="#ddd">
          <path d="M1 11C1 5 5 1 12 1M4 11C4 7 7 4 12 4M7 11C7 9 9 7 12 7M10 11C10 10.500 11 10 12 10" strokeWidth="1.200" />
        </Ico>
      </span>
      <span className="ml-[5px]">
        <Ico w={16} h={12} color="#fff">
          <path d="M.5 4.500H3L6 1.500V10.500L3 7.500H.5ZM8.500 4C9.500 5 9.500 7 8.500 8M10.500 2.500C12.500 4.500 12.500 7.500 10.500 9.500M12.500 1C15.500 4 15.500 8 12.500 11" />
        </Ico>
      </span>
      <span className="ml-[9px] text-[11px]">РУС</span>
      <time className="ml-[10px] w-[50px] whitespace-nowrap text-center text-[10px] leading-[15px]">
        22:33
        <br />
        08.05.2022
      </time>
      <button type="button" aria-label="Уведомления" className="relative ml-[15px] mr-[9px] h-[22px] w-[21px]">
        <Ico w={15} h={15} color="#363a41">
          <path d="M0 0H14V10H7L4 14V10H0Z" fill="#fff" stroke="none" />
          <path d="M2.500 3H11.500M2.500 5.500H11.500M2.500 8H8" />
        </Ico>
        <span className="absolute left-[7px] top-[8px] flex h-[14px] w-[14px] items-center justify-center rounded-full border border-[#999] bg-[#33363b] text-[10px] leading-none">
          1
        </span>
      </button>
      <span className="w-px self-stretch bg-[#6a6d72]" />
      <span className="w-[4px]" />
    </div>
  </div>
);

const App = (): JSX.Element => {
  const [tab, setTab] = useState<string>('Аннотации');

  return (
    <div className="relative flex h-screen flex-col overflow-hidden bg-[#eeeeee] font-['Open_Sans','Noto_Sans',sans-serif]">
      <TitleBar />
      <RibbonTabs active={tab} onPick={setTab} />
      <Ribbon />
      <div className="h-[22px] shrink-0" />
      <div className="flex min-h-0 flex-1 border-t border-[#cbcbcb]">
        <ProjectBrowser />
        <ViewArea />
        <Properties />
      </div>
      <StatusBar />
      <Taskbar />
      <ContextMenu />
    </div>
  );
};

export default App;
